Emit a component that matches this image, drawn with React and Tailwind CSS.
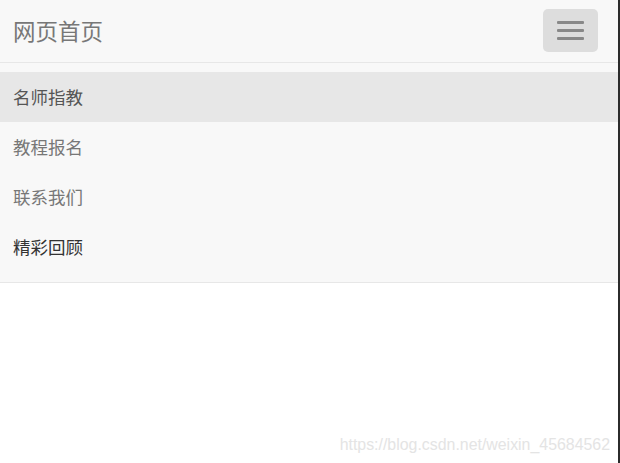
const links = [
  { label: "名师指教", cls: "bg-[#e7e7e7] text-[#555]" },
  { label: "教程报名", cls: "text-[#777]" },
  { label: "联系我们", cls: "text-[#777]" },
  { label: "精彩回顾", cls: "text-[#333]" },
];

export default function App() {
  return (
    <div
      className="relative flex h-[463px] w-[620px] overflow-hidden bg-white"
      style={{ fontFamily: '"Microsoft YaHei", "Noto Sans CJK SC", "Liberation Sans", sans-serif' }}
    >
      <div className="flex-1">
        <nav className="border-b border-[#e7e7e7] bg-[#f8f8f8]">
          <div className="flex h-[63px] items-center justify-between border-b border-[#e7e7e7] pb-px">
            <a className="pl-[13px] text-[22.5px] leading-none text-[#777]">网页首页</a>
            <button className="mr-5 flex h-[43px] w-[55px] flex-col items-center justify-center gap-[5.5px] rounded-[5px] bg-[#ddd]">
              <span className="block h-[2.5px] w-[27px] rounded-[1px] bg-[#888]" />
              <span className="block h-[2.5px] w-[27px] rounded-[1px] bg-[#888]" />
              <span className="block h-[2.5px] w-[27px] rounded-[1px] bg-[#888]" />
            </button>
          </div>
          <ul className="pt-[9px] pb-[10px]">
            {links.map((l) => (
              <li key={l.label} className={`flex h-[50px] items-center pl-[13px] text-[17.5px] ${l.cls}`}>
                {l.label}
              </li>
            ))}
          </ul>
        </nav>
      </div>
      <div className="w-[2px] bg-[#2b2b2b]" />
      <div
        className="absolute right-[10px] top-[433px] text-[15.9px] text-[#e4e4e4]"
        style={{ fontFamily: '"Liberation Sans", Arial, sans-serif' }}
      >
        https://blog.csdn.net/weixin_45684562
      </div>
    </div>
  );
}
